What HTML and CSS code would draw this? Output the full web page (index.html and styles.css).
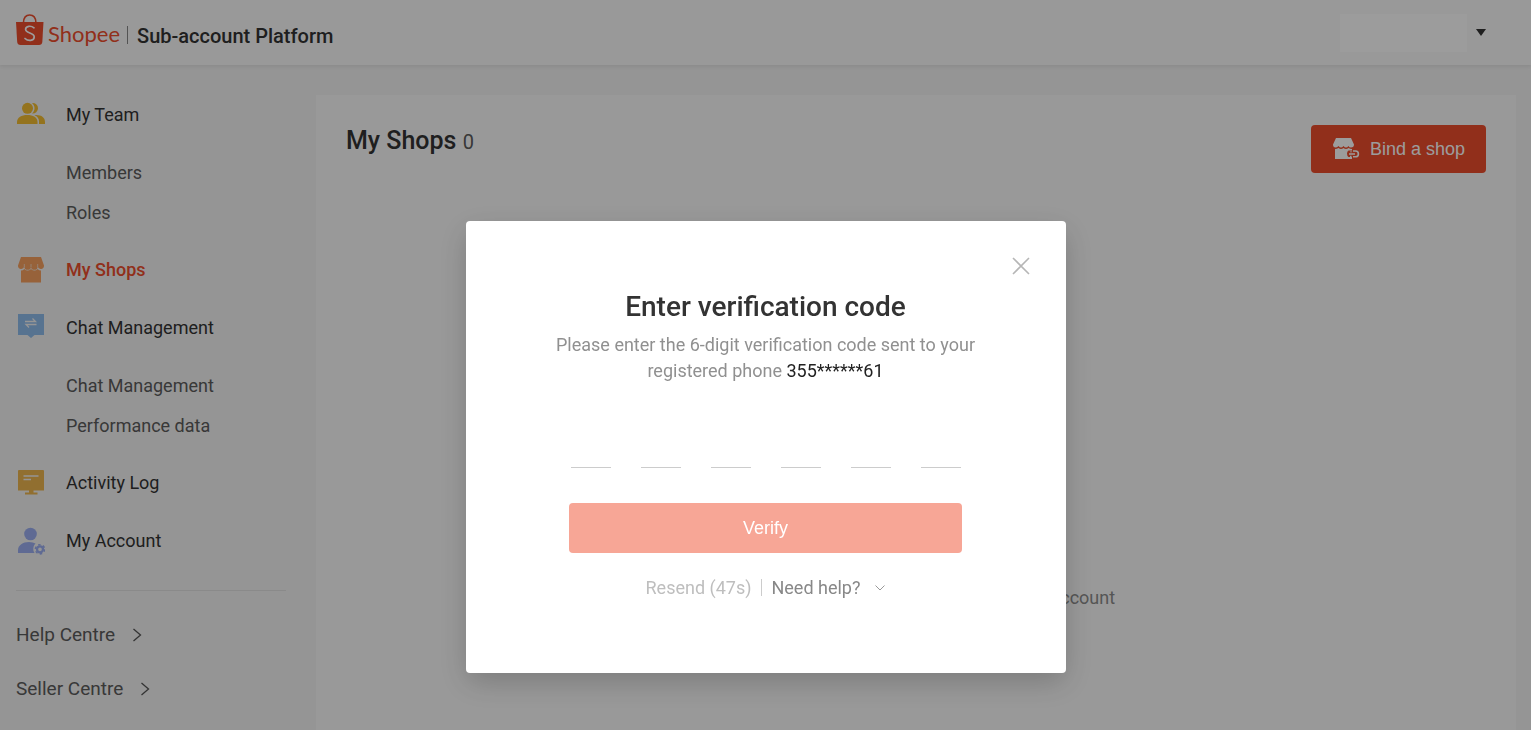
FILE: index.html
```html
<!DOCTYPE html>
<html lang="en">
<head>
<meta charset="utf-8">
<title>Sub-account Platform</title>
<link rel="stylesheet" href="styles.css">
</head>
<body>
<header class="topbar">
  <a class="brand" href="#" aria-label="Shopee">
    <svg class="brand-bag" width="28" height="32" viewBox="0 0 28 32" aria-hidden="true">
      <path d="M0 8H27.500L26.300 28Q26 31 23 31H4.500Q1.500 31 1.200 28Z" fill="#ee4d2d"/>
      <path d="M7.500 8.500C7.700 3.500 10.200 1 13.700 1S19.700 3.500 19.900 8.500" fill="none" stroke="#ee4d2d" stroke-width="1.600"/>
      <path d="M18 13.800C15.200 11.500 9.700 11.600 9.600 15.300C9.500 19.600 18.300 18.300 18.200 22.900C18.100 27.200 12 27.400 9 24.500" fill="none" stroke="#fff" stroke-width="1.700" stroke-linecap="round"/>
    </svg>
    <span class="brand-name">Shopee</span>
  </a>
  <span class="topbar-title">Sub-account Platform</span>
  <button class="user-menu" type="button" aria-label="User menu">
    <span class="user-name"></span>
    <svg width="10" height="7" viewBox="0 0 10 7" aria-hidden="true"><path d="M0 0H10L5 7Z" fill="#333"/></svg>
  </button>
</header>

<div class="layout">
  <aside class="sidebar">
    <nav class="nav">
      <a class="nav-item" href="#">
        <svg width="29" height="28" viewBox="-1 1 29 28" aria-hidden="true"><g fill="#f2bd31"><circle cx="10.500" cy="8.300" r="5.500"/><path d="M0 24V22C0 17.500 4.500 15 10.300 15S20.500 17.500 20.500 22V24Z"/><path d="M15 3A5.300 5.300 0 1 1 15 13.500C18.400 10.800 18.400 5.800 15 3Z"/><path d="M17.500 15.200C24 14.500 28 17.500 28 22V24H22V21.500C22 18.500 20.500 16.500 17.500 15.200Z"/></g></svg>
        My Team
      </a>
      <div class="subnav">
        <a class="subnav-item" href="#">Members</a>
        <a class="subnav-item" href="#">Roles</a>
      </div>
      <a class="nav-item nav-item-active" href="#">
        <svg width="29" height="28" viewBox="-1 0 29 28" aria-hidden="true"><g fill="#f7a15f"><path d="M4 1H24L27 9.500V10A3.200 3.200 0 0 1 20.700 10.500A3.300 3.300 0 0 1 14 10.500A3.300 3.300 0 0 1 7.300 10.500A3.200 3.200 0 0 1 1 10V9.500Z"/><path d="M4 14.500Q6 14.500 7.300 13Q10.500 16 14 13Q17.500 16 20.700 13Q22 14.500 24 14.500V26.500H4Z"/></g><path d="M7.300 8V11M14 8V11M20.700 8V11" stroke="#f3f3f3" stroke-width="0.600"/></svg>
        My Shops
      </a>
      <a class="nav-item" href="#">
        <svg width="29" height="28" viewBox="-1 1 29 28" aria-hidden="true"><path d="M2 0H26Q27 0 27 1V22H17.500L14 25L10.500 22H1V1Q1 0 2 0Z" fill="#8fbcec"/><path d="M8 8.500H18.500L15.500 5.500M19.500 11.500H9L12 14.500" fill="none" stroke="#f3f3f3" stroke-width="1.300"/></svg>
        Chat Management
      </a>
      <div class="subnav">
        <a class="subnav-item" href="#">Chat Management</a>
        <a class="subnav-item" href="#">Performance data</a>
      </div>
      <a class="nav-item" href="#">
        <svg width="29" height="28" viewBox="-1 0 29 28" aria-hidden="true"><path d="M2 1H26Q27 1 27 2V21.500H16.500V23.500H20.500V25.500H8V23.500H12V21.500H1V2Q1 1 2 1Z" fill="#eeb54f"/><path d="M6.500 7H21.500M6.500 10.500H14" stroke="#f3f3f3" stroke-width="1.300"/></svg>
        Activity Log
      </a>
      <a class="nav-item" href="#">
        <svg width="29" height="28" viewBox="-1 0 29 28" aria-hidden="true"><g fill="#9baef0"><circle cx="13.500" cy="7" r="6.300"/><path d="M1 26V23.500C1 18 6 15 12 15Q16 15 18.500 16.500Q15.500 19.500 16.500 24L17.500 26Z"/></g><circle cx="23" cy="22.300" r="3" fill="none" stroke="#9baef0" stroke-width="2.300"/><circle cx="23" cy="22.300" r="4.600" fill="none" stroke="#9baef0" stroke-width="1.600" stroke-dasharray="2.400 2.420"/></svg>
        My Account
      </a>
    </nav>
    <div class="side-links">
      <a class="side-link" href="#">Help Centre
        <svg width="10" height="14" viewBox="0 0 10 14" aria-hidden="true"><path d="M1.500 1L8.500 7L1.500 13" fill="none" stroke="#555" stroke-width="1.300"/></svg></a>
      <a class="side-link" href="#">Seller Centre
        <svg width="10" height="14" viewBox="0 0 10 14" aria-hidden="true"><path d="M1.500 1L8.500 7L1.500 13" fill="none" stroke="#555" stroke-width="1.300"/></svg></a>
    </div>
  </aside>

  <main class="panel">
    <div class="panel-head">
      <h1 class="panel-title">My Shops <span class="panel-count">0</span></h1>
      <button class="bind-button" type="button">
        <svg width="27" height="22" viewBox="0 0 27 22" aria-hidden="true"><path d="M3 0H18L21 6.500Q21 9.500 18 9.500Q16 9.500 15.500 8Q13 11 10.500 8Q8 11 5.500 8Q4 9.500 2.500 9.500Q0 9.500 0 6.500Z" fill="#fff"/><path d="M2 11Q4 11 5.500 10Q8 12 10.500 10Q13 12 15.500 10Q17 11 19 11V12.500H15.500Q14 13.500 14 15.500Q14 18 15.500 19H19V21H2Z" fill="#fff"/><path d="M20 13H22.500A2.900 2.900 0 0 1 22.500 18.800H20M18.500 13.800H17.500M16 16H22M18.500 18.600H17" fill="none" stroke="#fff" stroke-width="1.600"/></svg>
        Bind a shop
      </button>
    </div>
    <p class="empty-text">There are no shops bound to your current account</p>
  </main>
</div>

<div class="overlay">
  <form class="dialog" role="dialog" aria-modal="true" aria-labelledby="dialog-title">
    <button class="dialog-close" type="button" aria-label="Close">
      <svg width="18" height="18" viewBox="0 0 18 18" aria-hidden="true"><path d="M1 1L17 17M17 1L1 17" stroke="#b6b6b6" stroke-width="1.600"/></svg>
    </button>
    <h2 class="dialog-title" id="dialog-title">Enter verification code</h2>
    <p class="dialog-text">Please enter the 6-digit verification code sent to your registered phone <span class="phone">355******61</span></p>
    <div class="code">
      <input class="code-digit" type="text" inputmode="numeric" maxlength="1" aria-label="Digit 1">
      <input class="code-digit" type="text" inputmode="numeric" maxlength="1" aria-label="Digit 2">
      <input class="code-digit" type="text" inputmode="numeric" maxlength="1" aria-label="Digit 3">
      <input class="code-digit" type="text" inputmode="numeric" maxlength="1" aria-label="Digit 4">
      <input class="code-digit" type="text" inputmode="numeric" maxlength="1" aria-label="Digit 5">
      <input class="code-digit" type="text" inputmode="numeric" maxlength="1" aria-label="Digit 6">
    </div>
    <button class="verify-button" type="submit" disabled>Verify</button>
    <div class="dialog-foot">
      <button class="resend" type="button" disabled>Resend (47s)</button>
      <button class="help" type="button">Need help?
        <svg width="10" height="6" viewBox="0 0 10 6" aria-hidden="true"><path d="M0.500 0.500L5 5L9.500 0.500" fill="none" stroke="#999"/></svg>
      </button>
    </div>
  </form>
</div>
</body>
</html>
```

FILE: styles.css
```css
* { box-sizing: border-box; }

body {
  margin: 0;
  height: 100vh;
  overflow: hidden;
  display: flex;
  flex-direction: column;
  background: #f3f3f3;
  color: #333;
  font: 18px/26px Roboto, "Liberation Sans", sans-serif;
}

a { color: inherit; text-decoration: none; }
h1, h2, p { margin: 0; font-weight: 400; }
button {
  padding: 0;
  border: 0;
  background: none;
  color: inherit;
  font: inherit;
}
svg { flex: none; display: block; }

.topbar {
  flex: none;
  display: flex;
  align-items: center;
  height: 65px;
  padding: 0 45px 0 16px;
  background: #fbfbfb;
  box-shadow: 0 1px 4px rgba(0, 0, 0, 0.09);
}
.brand {
  display: flex;
  align-items: center;
  gap: 4px;
  padding-bottom: 5px;
}
.brand-name {
  padding-top: 8px;
  color: #ee4d2d;
  font: 22px/26px Lato, sans-serif;
}
.topbar-title {
  position: relative;
  margin-left: 7px;
  padding: 6px 0 0 10px;
  font-size: 20px;
  font-weight: 500;
}
.topbar-title::before {
  content: "";
  position: absolute;
  left: 0;
  top: 9px;
  height: 18px;
  border-left: 1px solid #888;
}
.user-menu {
  display: flex;
  align-items: center;
  gap: 9px;
  margin-left: auto;
}
.user-name {
  width: 127px;
  height: 38px;
  background: #fff;
}

.layout {
  flex: 1;
  display: flex;
  min-height: 0;
}
.sidebar {
  flex: none;
  width: 316px;
  padding: 21px 30px 0 16px;
}
.nav-item {
  display: flex;
  align-items: center;
  gap: 21px;
  height: 58px;
}
.nav-item-active { color: #ee4d2d; font-weight: 500; }
.subnav { padding: 9px 0 8px; }
.subnav-item {
  display: flex;
  align-items: center;
  height: 40px;
  padding-left: 50px;
  color: #5c5c5c;
}
.side-links {
  margin-top: 20px;
  padding-top: 17px;
  border-top: 1px solid #e2e2e2;
}
.side-link {
  display: flex;
  align-items: center;
  gap: 17px;
  height: 54px;
  color: #5c5c5c;
  font-size: 19px;
}

.panel {
  flex: 1;
  margin: 30px 15px 0 0;
  padding: 30px;
  background: #fbfbfb;
}
.panel-head {
  display: flex;
  justify-content: space-between;
  align-items: flex-start;
}
.panel-title {
  font-size: 25px;
  line-height: 32px;
  font-weight: 500;
}
.panel-count {
  color: #5c5c5c;
  font-size: 20px;
  font-weight: 400;
}
.bind-button {
  display: flex;
  align-items: center;
  gap: 10px;
  height: 48px;
  padding: 0 21px 0 22px;
  border-radius: 4px;
  background: #ee4d2d;
  color: #fff;
  font: 18px/26px "Liberation Sans", sans-serif;
}
.empty-text {
  padding-top: 412px;
  color: #8c8c8c;
  text-align: center;
}

.overlay {
  position: fixed;
  inset: 0;
  display: flex;
  justify-content: center;
  align-items: flex-start;
  padding-top: 221px;
  background: rgba(0, 0, 0, 0.39);
}
.dialog {
  position: relative;
  width: 600px;
  padding: 70px 90px 72px;
  border-radius: 4px;
  background: #fff;
  box-shadow: 0 10px 30px rgba(0, 0, 0, 0.2);
  text-align: center;
}
.dialog-close {
  position: absolute;
  top: 36px;
  right: 36px;
}
.dialog-title {
  font-size: 28px;
  line-height: 32px;
  font-weight: 500;
}
.dialog-text {
  padding-top: 9px;
  color: #909090;
}
.phone { color: #222; }
.code {
  display: flex;
  justify-content: center;
  gap: 30px;
  margin-top: 43px;
}
.code-digit {
  width: 40px;
  height: 41px;
  padding: 0;
  border: 0;
  border-bottom: 1px solid #ccc;
  border-radius: 0;
  background: none;
  font: 28px/40px Roboto, sans-serif;
  text-align: center;
}
.verify-button {
  width: 393px;
  height: 50px;
  margin-top: 35px;
  border-radius: 4px;
  background: #f7a696;
  color: #fff;
  font-family: "Liberation Sans", sans-serif;
}
.dialog-foot {
  display: flex;
  justify-content: center;
  align-items: center;
  margin-top: 22px;
}
.resend { color: #bebebe; }
.help {
  position: relative;
  display: flex;
  align-items: center;
  gap: 15px;
  margin-left: 10px;
  padding-left: 10px;
  color: #888;
}
.help::before {
  content: "";
  position: absolute;
  left: 0;
  top: 4px;
  height: 17px;
  border-left: 1px solid #ccc;
}
```
